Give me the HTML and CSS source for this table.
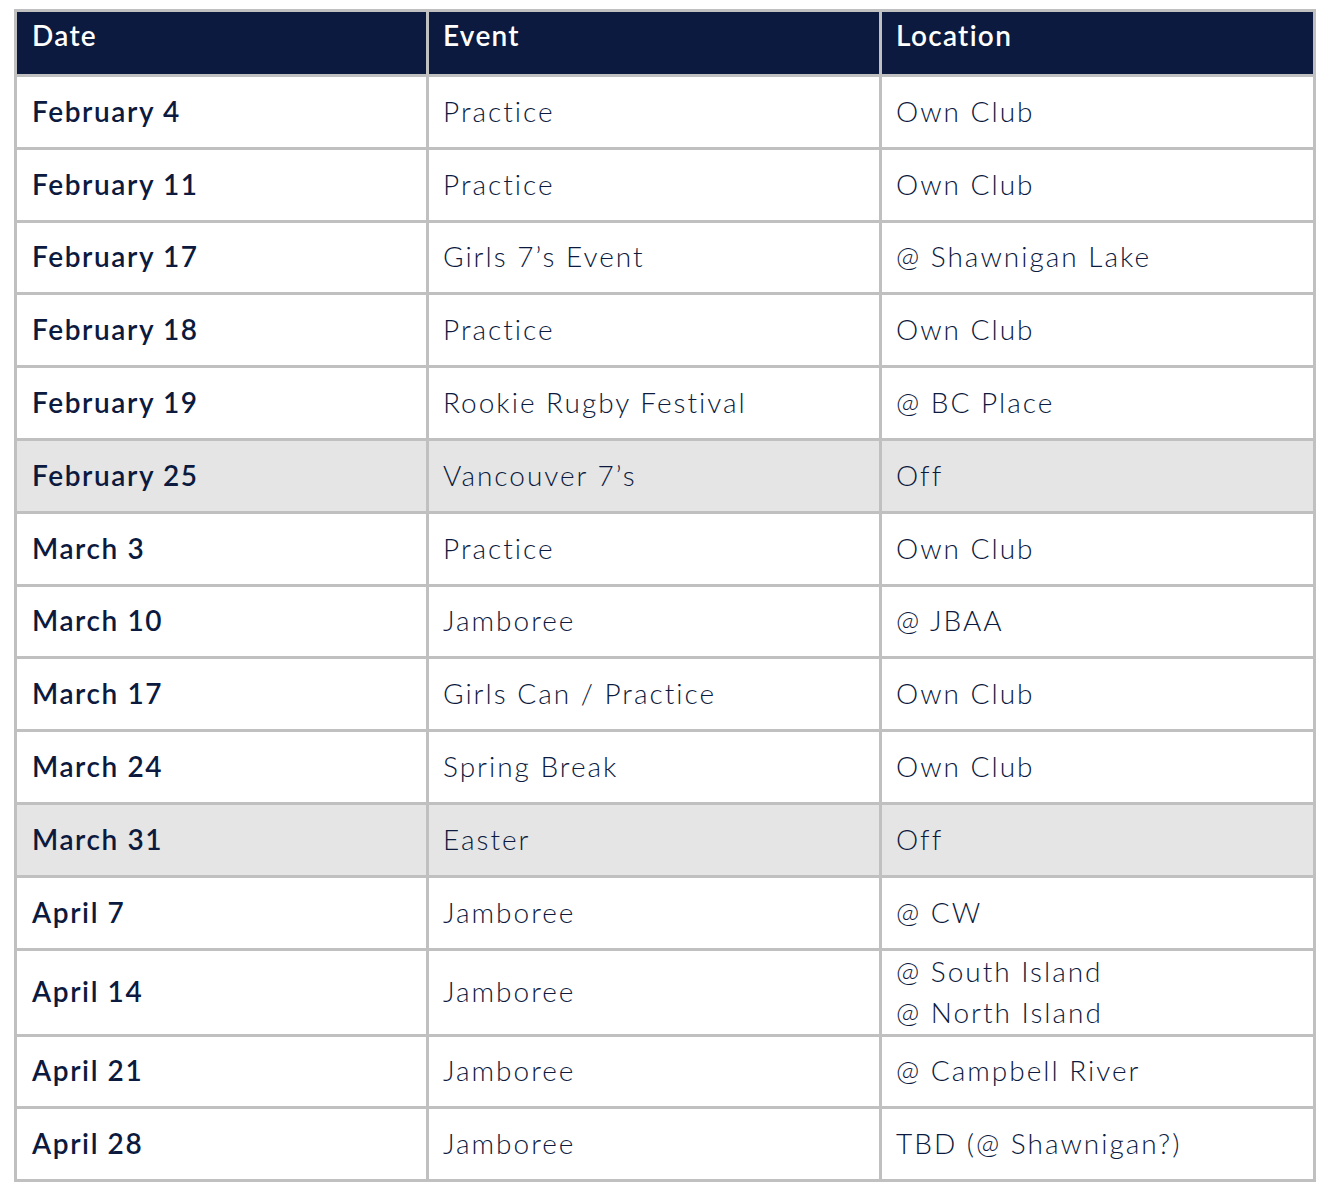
FILE: index.html
```html
<!DOCTYPE html>
<html>
<head>
<meta charset="utf-8">
<link rel="stylesheet" href="styles.css">
</head>
<body>
<table class="schedule">
  <colgroup>
    <col class="c-date">
    <col class="c-event">
    <col class="c-loc">
  </colgroup>
  <thead>
    <tr><th>Date</th><th>Event</th><th>Location</th></tr>
  </thead>
  <tbody>
    <tr><td class="date">February 4</td><td>Practice</td><td>Own Club</td></tr>
    <tr><td class="date">February 11</td><td>Practice</td><td>Own Club</td></tr>
    <tr><td class="date">February 17</td><td>Girls 7’s Event</td><td>@ Shawnigan Lake</td></tr>
    <tr><td class="date">February 18</td><td>Practice</td><td>Own Club</td></tr>
    <tr><td class="date">February 19</td><td>Rookie Rugby Festival</td><td>@ BC Place</td></tr>
    <tr class="off"><td class="date">February 25</td><td>Vancouver 7’s</td><td>Off</td></tr>
    <tr><td class="date">March 3</td><td>Practice</td><td>Own Club</td></tr>
    <tr><td class="date">March 10</td><td>Jamboree</td><td>@ JBAA</td></tr>
    <tr><td class="date">March 17</td><td>Girls Can / Practice</td><td>Own Club</td></tr>
    <tr><td class="date">March 24</td><td>Spring Break</td><td>Own Club</td></tr>
    <tr class="off"><td class="date">March 31</td><td>Easter</td><td>Off</td></tr>
    <tr><td class="date">April 7</td><td>Jamboree</td><td>@ CW</td></tr>
    <tr><td class="date">April 14</td><td>Jamboree</td><td>@ South Island<br>@ North Island</td></tr>
    <tr><td class="date">April 21</td><td>Jamboree</td><td>@ Campbell River</td></tr>
    <tr><td class="date">April 28</td><td>Jamboree</td><td>TBD (@ Shawnigan?)</td></tr>
  </tbody>
</table>
</body>
</html>
```
FILE: styles.css
```css
html, body {
  margin: 0;
  background: #ffffff;
}
body {
  padding: 9px 8px 0 14px;
  font-family: "Lato", "Liberation Sans", sans-serif;
  color: #0b1a3e;
}
.schedule {
  border-collapse: collapse;
  table-layout: fixed;
  width: 1299px;
}
.c-date { width: 412px; }
.c-event { width: 453px; }
.c-loc { width: 434px; }
.schedule th,
.schedule td {
  border: 3px solid #c0c0c0;
  text-align: left;
  vertical-align: middle;
  font-size: 28px;
  line-height: 41px;
}
.schedule th {
  background: #0b1a3e;
  color: #ffffff;
  font-weight: 600;
  padding: 3px 14px 18px 14px;
  letter-spacing: 1.3px;
}
.schedule th:first-child {
  padding-left: 15px;
}
.schedule td {
  height: 72.8px;
  box-sizing: border-box;
  padding: 0 14px 1px 14px;
  font-weight: 300;
  letter-spacing: 2px;
}
.schedule td.date {
  padding-left: 15px;
  font-weight: 600;
  letter-spacing: 1.6px;
}
.schedule tr.off td {
  background: #e5e5e5;
}
```
